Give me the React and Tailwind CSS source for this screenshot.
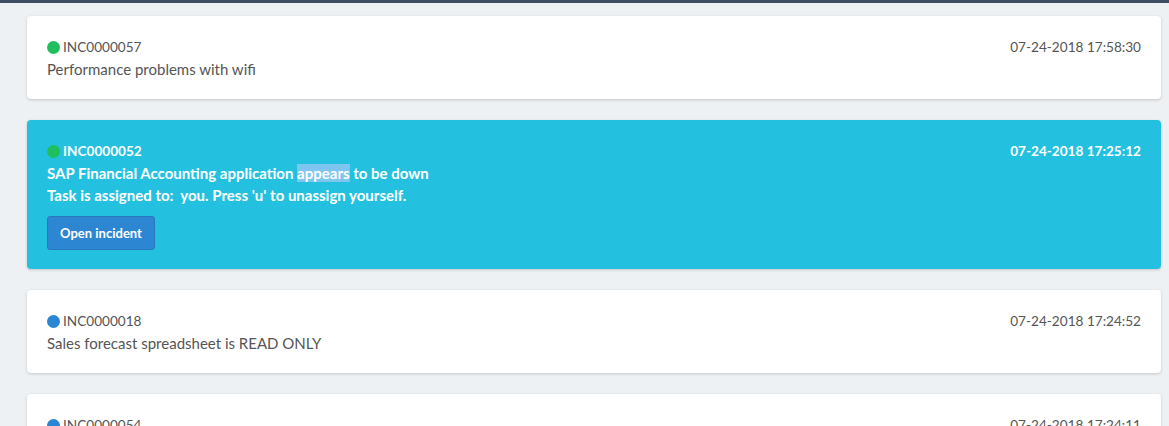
import React from 'react';

const incidents = [
    { id: 'INC0000057', status: 'green', title: 'Performance problems with wifi', date: '07-24-2018 17:58:30' },
    { id: 'INC0000052', status: 'green', title: 'SAP Financial Accounting application', highlight: 'appears', rest: ' to be down', date: '07-24-2018 17:25:12', active: true },
    { id: 'INC0000018', status: 'blue', title: 'Sales forecast spreadsheet is READ ONLY', date: '07-24-2018 17:24:52' },
    { id: 'INC0000054', status: 'blue', title: 'Unable to connect to email', date: '07-24-2018 17:24:11' },
];

const dotColor = {
    green: 'bg-[#1fbf5e]',
    blue: 'bg-[#2a85d2]',
};

const IncidentCard = ({ incident }) => {
    const active = incident.active;
    return (
        <div
            className={`rounded-[4px] px-5 pt-[20px] pb-[19px] text-[15px] leading-[22px] shadow-[0_1px_3px_rgba(0,0,0,0.18)] ${
                active ? 'bg-[#23c1df] text-white font-bold' : 'bg-white text-[#555]'
            }`}
        >
            <div className="flex justify-between">
                <div className="flex items-center text-[14px]">
                    <span className={`w-[13px] h-[13px] rounded-full mr-[3px] ${dotColor[incident.status]}`}></span>
                    <span className="text-[13.6px]">{incident.id}</span>
                </div>
                <span className="text-[13.6px]">{incident.date}</span>
            </div>
            <div>
                {incident.title}
                {incident.highlight && (
                    <>
                        {' '}
                        <span className="bg-[#7ec6ef]">{incident.highlight}</span>
                        {incident.rest}
                    </>
                )}
            </div>
            {active && (
                <>
                    <div className="whitespace-pre">Task is assigned to:  you. Press 'u' to unassign yourself.</div>
                    <button className="mt-[10px] h-[34px] w-[108px] rounded-[3px] bg-[#2d86d1] border border-[#2a77bd] text-white text-[13px] leading-none font-bold">
                        Open incident
                    </button>
                </>
            )}
        </div>
    );
};

const App = () => {
    return (
        <div
            className="h-[426px] overflow-hidden bg-[#eef1f3]"
            style={{ fontFamily: 'Lato, "Open Sans", sans-serif' }}
        >
            <div className="h-[3px] bg-[#3f4d63]"></div>
            <div className="pl-[27px] pr-2 pt-[13px] flex flex-col gap-[21px]">
                {incidents.map(incident => (
                    <IncidentCard key={incident.id} incident={incident} />
                ))}
            </div>
        </div>
    );
};

export default App;
